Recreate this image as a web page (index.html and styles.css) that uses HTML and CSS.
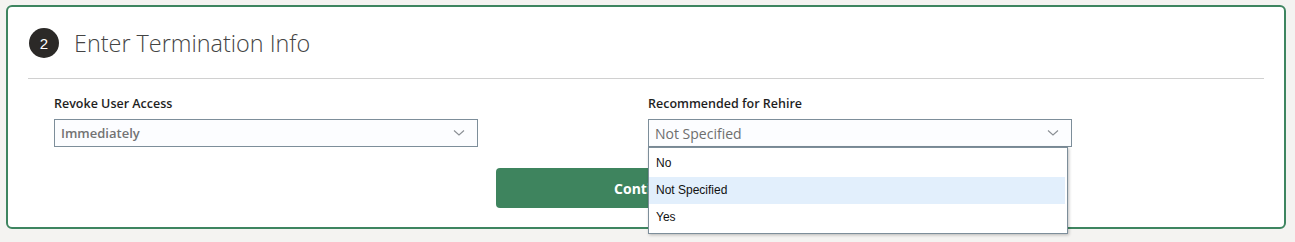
FILE: index.html
```html
<!DOCTYPE html>
<html>
<head>
  <title>Termination</title>
  <link rel="stylesheet" href="styles.css">
</head>
<body>
  <div class="card">
    <div class="card-header">
      <span class="step">2</span>
      <h2>Enter Termination Info</h2>
    </div>
    <div class="fields">
      <div class="field">
        <label>Revoke User Access</label>
        <div class="select">
          <span class="value strong">Immediately</span>
          <svg class="chevron" width="12" height="8" viewBox="0 0 12 8"><path d="M1 1.5 L6 6 L11 1.5" fill="none" stroke="#8a8f94" stroke-width="1.1"/></svg>
        </div>
      </div>
      <div class="field">
        <label>Recommended for Rehire</label>
        <div class="select open">
          <span class="value big">Not Specified</span>
          <svg class="chevron" width="12" height="8" viewBox="0 0 12 8"><path d="M1 1.5 L6 6 L11 1.5" fill="none" stroke="#8a8f94" stroke-width="1.1"/></svg>
          <ul class="options">
            <li>No</li>
            <li class="active">Not Specified</li>
            <li>Yes</li>
          </ul>
        </div>
      </div>
    </div>
    <div class="actions">
      <button type="button" class="continue">Continue</button>
    </div>
  </div>
</body>
</html>
```

FILE: styles.css
```css
/* page */
body {
  margin: 0;
  padding: 5px 9px 12px 6px;
  background-color: #f4f3f1;
  font-family: "Open Sans", "Noto Sans", sans-serif;
  color: #222;
}

.card {
  background-color: #fff;
  border: 2px solid #3e8560;
  border-radius: 6px;
  padding: 0 20px 20px 20px;
  height: 224px;
  box-sizing: border-box;
}

.card-header {
  display: flex;
  align-items: center;
  gap: 15px;
  height: 72px;
  padding-top: 1px;
  padding-left: 1px;
  border-bottom: 1px solid #d0d0d0;
  box-sizing: border-box;
}

.step {
  width: 30px;
  height: 30px;
  border-radius: 50%;
  background-color: #2b2927;
  color: #fff;
  font-family: "Liberation Sans", Arial, sans-serif;
  font-size: 15px;
  display: flex;
  align-items: center;
  justify-content: center;
}

.card-header h2 {
  margin: 0;
  font-weight: 300;
  font-size: 23.4px;
  color: #444;
}

.fields {
  display: flex;
  gap: 170px;
  padding-left: 26px;
  padding-top: 16px;
}

.field {
  width: 424px;
}

.field label {
  display: block;
  font-size: 12.5px;
  font-weight: 600;
  color: #1f1f1f;
  margin-bottom: 7px;
}

.select {
  position: relative;
  display: flex;
  align-items: center;
  justify-content: space-between;
  height: 28px;
  box-sizing: border-box;
  border: 1px solid #7d8e9a;
  background-color: #fcfdff;
  padding: 0 12px 0 6px;
}

.select .value {
  font-size: 13px;
  color: #737373;
}

.select .value.strong {
  font-weight: 600;
}

.select .value.big {
  font-size: 14px;
  color: #6e6e6e;
}

.options {
  position: absolute;
  top: 27px;
  left: -1px;
  width: 420px;
  margin: 0;
  padding: 2px 0;
  list-style: none;
  background-color: #fff;
  border: 1px solid #7d8e9a;
  box-shadow: 1px 1px 3px rgba(0, 0, 0, 0.25);
  box-sizing: border-box;
  font-family: "Liberation Sans", Arial, sans-serif;
  font-size: 12px;
  color: #111;
  z-index: 2;
}

.options li {
  height: 27px;
  line-height: 27px;
  padding-left: 7px;
  margin-right: 2px;
}

.options li.active {
  background-color: #e2effc;
}

.actions {
  display: flex;
  justify-content: center;
  padding-top: 21px;
}

.continue {
  width: 300px;
  height: 40px;
  border: none;
  border-radius: 4px;
  background-color: #3e845e;
  color: #fff;
  font-family: "Open Sans", sans-serif;
  font-weight: 700;
  font-size: 14px;
  cursor: pointer;
}
```
